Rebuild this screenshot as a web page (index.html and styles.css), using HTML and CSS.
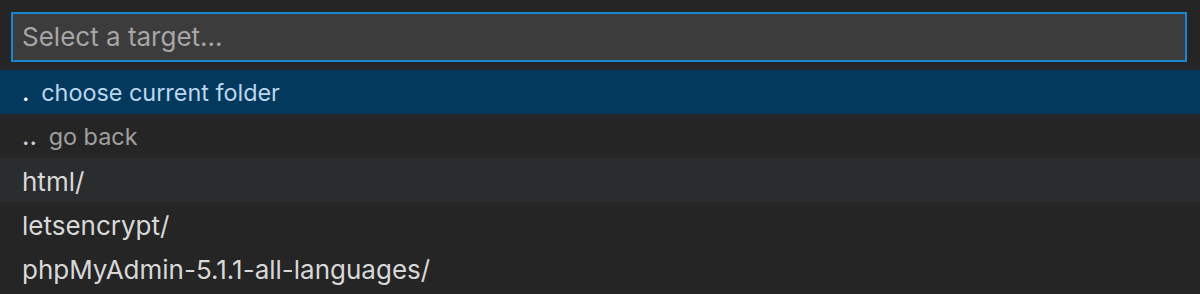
FILE: index.html
```html
<!DOCTYPE html>
<html lang="en">
<head>
    <meta charset="UTF-8">
    <title>Select a target</title>
    <link rel="stylesheet" href="styles.css">
</head>
<body>
    <div class="quick-pick">
        <div class="input-wrap">
            <input class="filter" type="text" placeholder="Select a target...">
        </div>
        <ul class="list">
            <li class="row selected"><span class="prefix">.</span><span class="desc">choose current folder</span></li>
            <li class="row"><span class="prefix">..</span><span class="desc muted">go back</span></li>
            <li class="row plain hover">html/</li>
            <li class="row plain">letsencrypt/</li>
            <li class="row plain">phpMyAdmin-5.1.1-all-languages/</li>
        </ul>
    </div>
</body>
</html>
```

FILE: styles.css
```css
body {
    margin: 0;
    background: #252526;
    font-family: Inter, "Liberation Sans", Arial, sans-serif;
    color: #cccccc;
}
.quick-pick {
    padding-top: 12px;
}
.input-wrap {
    padding: 0 13px 0 11px;
}
.filter {
    display: block;
    box-sizing: border-box;
    width: 100%;
    height: 50px;
    margin: 0;
    padding: 0 0 2px 9px;
    background: #3c3c3c;
    border: 2px solid #1a85d0;
    outline: none;
    font-family: inherit;
    font-size: 26px;
    color: #cccccc;
}
.filter::placeholder {
    color: #a6a6a6;
}
.list {
    list-style: none;
    margin: 8px 0 0 0;
    padding: 0;
}
.row {
    box-sizing: border-box;
    height: 44px;
    line-height: 44px;
    padding-left: 22px;
    font-size: 26px;
    color: #d8d8d8;
    white-space: nowrap;
    overflow: hidden;
}
.row.plain {
    padding-top: 3px;
    line-height: 41px;
}
.row.selected {
    background: #04395e;
}
.row.hover {
    background: #2a2d2e;
}
.prefix {
    color: #d0d0d0;
}
.selected .prefix {
    color: #ffffff;
}
.desc {
    font-size: 0.9em;
    margin-left: 0.5em;
}
.selected .desc {
    color: #bcd6ec;
}
.desc.muted {
    color: #a0a0a0;
}
```
